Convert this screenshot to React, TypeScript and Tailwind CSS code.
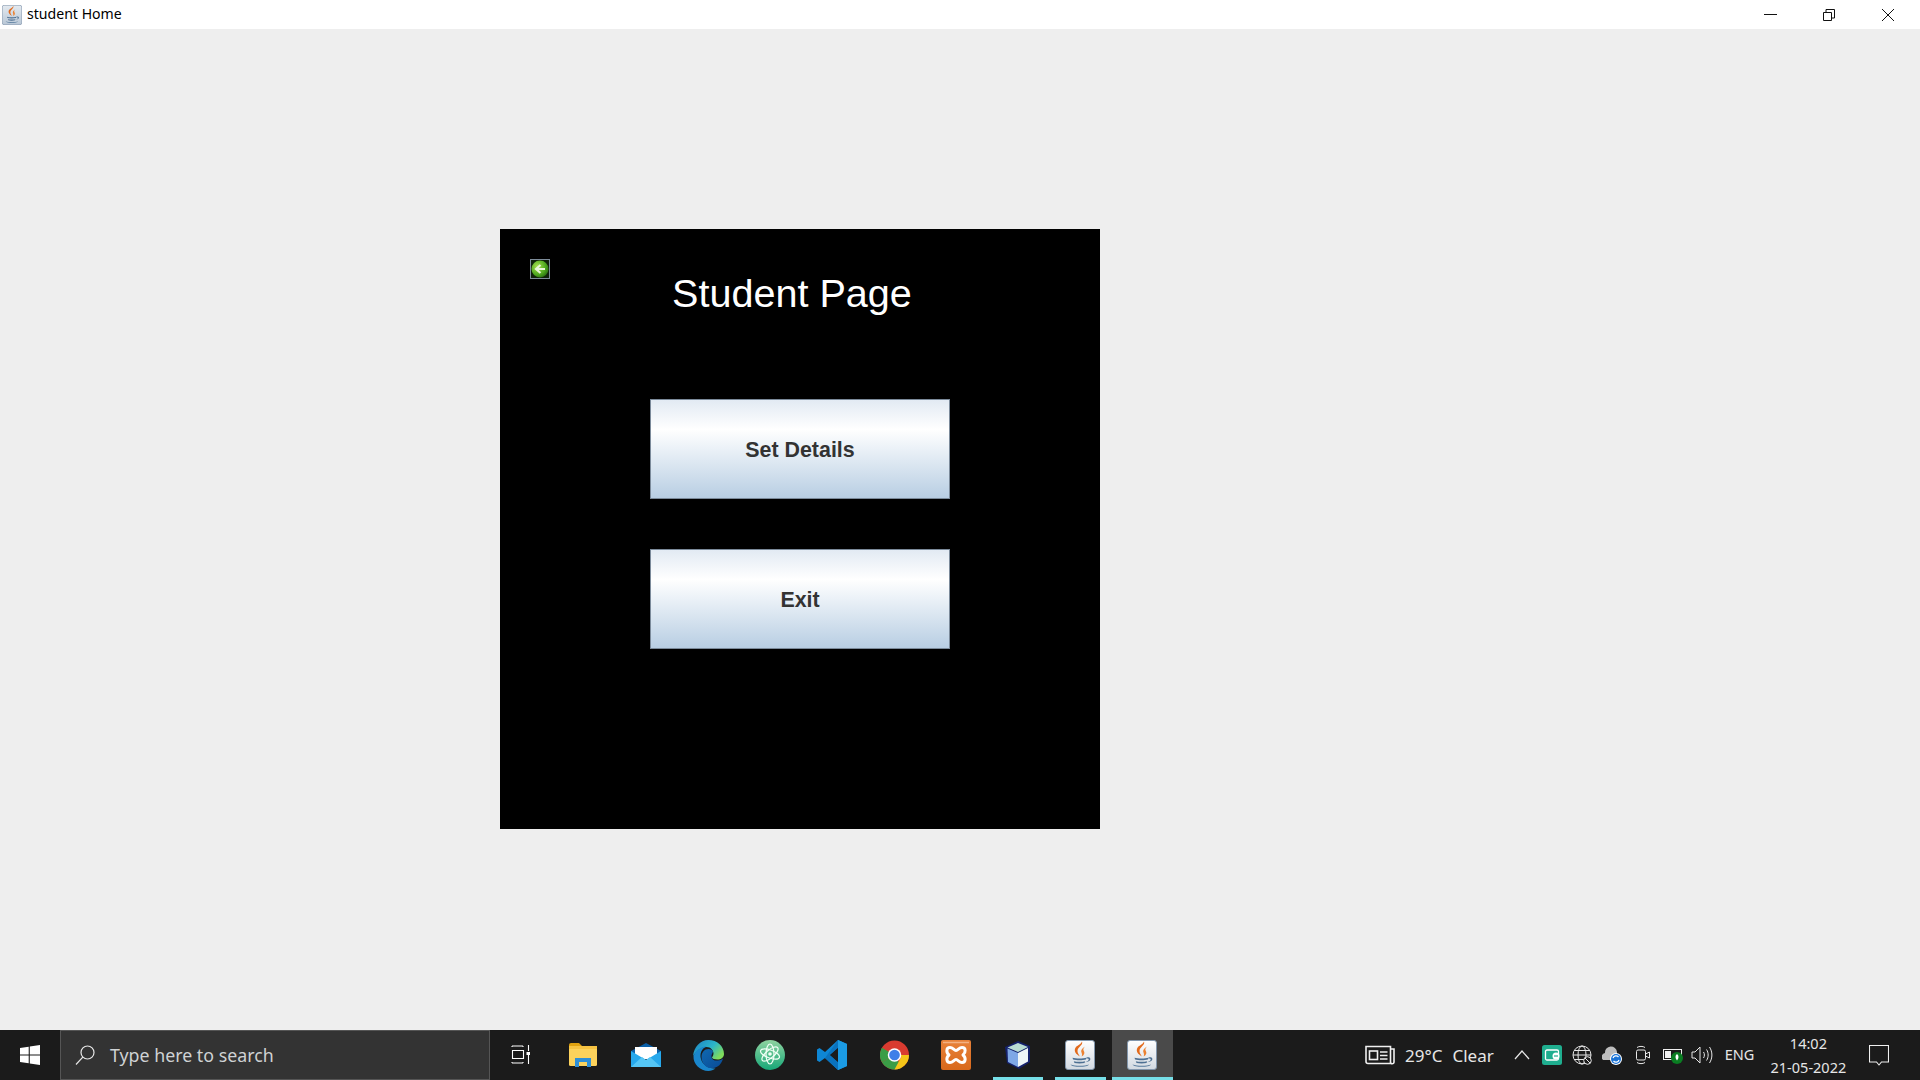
const sans = "font-['Liberation_Sans',Arial,sans-serif]";
const ui = "font-['Noto_Sans','Open_Sans',sans-serif]";

function JavaIcon({ size = 30, id, tint = false }: { size?: number; id: string; tint?: boolean }) {
  return (
    <svg width={size} height={size} viewBox="0 0 30 30">
      <defs>
        <linearGradient id={id} x1="0" y1="0" x2="0" y2="1">
          <stop offset="0" stopColor={tint ? "#e4eaf0" : "#ffffff"} />
          <stop offset="1" stopColor={tint ? "#b9c7d6" : "#d2d9e1"} />
        </linearGradient>
      </defs>
      <rect x="0.5" y="0.5" width="29" height="29" rx="2.5" fill={`url(#${id})`} stroke="#8296ac" />
      <path d="M17 1.500c1.500 3.500-4.500 5.500-4.500 9.500 0 2 1.300 3.500 2.300 5.500C11 14 8.700 11.500 10.300 8 11.500 5.500 16 4.500 17 1.500z" fill="#e26a1c" />
      <path d="M20 6.500c-2.500 1.800-4.500 3.500-3.500 6 .5 1.200.8 2.300.2 4 2.800-1.700 3.300-3.800 2-5.800-.8-1.300-.3-2.600 1.300-4.200z" fill="#ec8232" />
      <path d="M7.500 17.800c3.500 1 10.500 1 14 0l-.6 1.800c-3.300.9-9.500.9-12.800 0zM8.800 21.200c3 .8 8.400.8 11.400 0l-.7 1.800c-2.800.6-7.200.6-10 0z" fill="#4d6f92" />
      <path d="M21.500 17.500c3.500-1 5 1.500 3 3.300-1 .9-2.500 1.400-4.300 1.500 1.700-.7 3.200-1.400 3.500-2.500.2-1-.8-1.500-2.300-1.300z" fill="#4d6f92" />
      <path d="M5.500 24.500c4.500 1.800 14.500 1.800 18.500 0-1 3-17 3.200-18.500 0z" fill="#567a9c" />
    </svg>
  );
}

function Cell({ w = "w-[62px]", children, bar, active }: { w?: string; children: React.ReactNode; bar?: boolean; active?: boolean }) {
  return (
    <div className={`relative flex h-full items-center justify-center ${w} ${active ? "bg-[#4a4a4a]" : ""}`}>
      {children}
      {bar && <div className={`absolute bottom-0 h-[3px] bg-[#76dfe8] ${active ? "inset-x-0" : "inset-x-[6px]"}`} />}
    </div>
  );
}

function TaskButton({ label }: { label: string }) {
  return (
    <button className={`flex h-[100px] w-[300px] items-center justify-center border border-[#7b8a9a] bg-[linear-gradient(180deg,#e2eaf3_0%,#ffffff_30%,#b8cee3_100%)] pt-[3px] text-[21.4px] font-bold text-[#333333] ${sans}`}>
      {label}
    </button>
  );
}

export default function App() {
  return (
    <div className="flex h-screen w-full flex-col overflow-hidden bg-[#eeeeee]">
      {/* Title bar */}
      <div className="flex h-[29px] shrink-0 items-center bg-white">
        <div className="ml-[2px] mr-[5px] flex">
          <JavaIcon size={20} id="jt" tint />
        </div>
        <span className={`text-[14.1px] leading-none text-black ${ui}`}>student Home</span>
        <div className="ml-auto flex h-full items-center">
          <svg width="14" height="14" viewBox="0 0 14 14" className="mr-[44px]"><path d="M0 6.500h13" stroke="#111" strokeWidth="1" /></svg>
          <svg width="14" height="14" viewBox="0 0 14 14" className="mr-[45px]"><path d="M1.500 4.500h8v8h-8zM4 4.500V1.500h8.500V10H9.500" fill="none" stroke="#111" strokeWidth="1" /></svg>
          <svg width="14" height="14" viewBox="0 0 14 14" className="mr-[25px]"><path d="M1 1l12 12M13 1L1 13" stroke="#111" strokeWidth="1" /></svg>
        </div>
      </div>

      {/* Content */}
      <main className="flex-1 pl-[500px] pt-[200px]">
        <section className="h-[600px] w-[600px] bg-black">
          <div className="flex h-[170px] items-start pl-[30px] pt-[30px]">
            <svg width="20" height="20" viewBox="0 0 20 20" className="shrink-0">
              <defs>
                <radialGradient id="bk" cx="0.35" cy="0.35" r="0.8">
                  <stop offset="0" stopColor="#a8e050" />
                  <stop offset="0.6" stopColor="#4ea81e" />
                  <stop offset="1" stopColor="#1c5c0c" />
                </radialGradient>
              </defs>
              <rect x="0.500" y="0.500" width="19" height="19" fill="#10220a" stroke="#7d8b99" />
              <circle cx="10" cy="10" r="8.500" fill="url(#bk)" />
              <path d="M15 10H7M10.500 6L6 10l4.500 4" fill="none" stroke="#e8f6d8" strokeWidth="2.200" />
            </svg>
            <h1 className={`ml-[122px] mt-[11px] text-[39.6px] font-normal leading-[46px] text-white ${sans}`}>Student Page</h1>
          </div>
          <div className="flex flex-col gap-[50px] pl-[150px]">
            <TaskButton label="Set Details" />
            <TaskButton label="Exit" />
          </div>
        </section>
      </main>

      {/* Taskbar */}
      <footer className={`flex h-[50px] shrink-0 items-center bg-[#1b1b1b] text-[#e6e6e6] ${ui}`}>
        <div className="flex h-full w-[60px] items-center justify-center">
          <svg width="20" height="20" viewBox="0 0 20 20" fill="#fff">
            <path d="M0 3l8.700-1.300v7.800H0zM9.800 1.500L20 0v9.500H9.800zM0 10.500h8.700v7.800L0 17zM9.800 10.500H20V20L9.800 18.500z" />
          </svg>
        </div>
        <div className="flex h-full w-[430px] items-center border border-[#555555] bg-[#333333] pl-[13px]">
          <svg width="22" height="22" viewBox="0 0 22 22" fill="none" stroke="#e8e8e8" strokeWidth="1.200">
            <circle cx="13.500" cy="8.500" r="6.500" />
            <path d="M8.800 13.200L2 20.500" />
          </svg>
          <span className="ml-[14px] text-[17.8px] text-[#cfd2d4]">Type here to search</span>
        </div>

        <Cell w="w-[61px]">
          <svg width="20" height="20" viewBox="0 0 20 20" fill="none" stroke="#fff" strokeWidth="1.100">
            <path d="M1 1h11M1.500 5.500h11v8h-11zM1 18h11M1 18v-1M12 18v-1M1 1v1M12 1v1" />
            <path d="M17.500 0v6M17.500 10v9" />
            <rect x="15.500" y="7" width="3.500" height="3" fill="#fff" stroke="none" />
          </svg>
        </Cell>
        <Cell w="w-[64px]">
          <svg width="28" height="24" viewBox="0 0 28 24">
            <path d="M0 2a2 2 0 012-2h8l3 3h-13z" fill="#e0a210" />
            <rect x="0" y="3" width="28" height="20" rx="1.500" fill="#fcd25c" />
            <path d="M0 3h28v3H0z" fill="#f6c342" />
            <path d="M6 24v-9h16v9h-4v-5h-8v5z" fill="#2f8fd6" />
          </svg>
        </Cell>
        <Cell>
          <svg width="30" height="24" viewBox="0 0 30 24">
            <path d="M0 8L15 0l15 8v3H0z" fill="#0a5fa8" />
            <rect x="4" y="4" width="22" height="12" fill="#fff" />
            <path d="M0 8l15 9 15-9v16H0z" fill="#26a8ec" />
            <path d="M0 24l11-10 4 3 4-3 11 10z" fill="#55c6f5" />
          </svg>
        </Cell>
        <Cell>
          <svg width="31" height="31" viewBox="0 0 31 31">
            <defs>
              <linearGradient id="e1" x1="0" y1="0" x2="1" y2="0.600"><stop offset="0" stopColor="#1c7fc4" /><stop offset="0.600" stopColor="#2bb5c9" /><stop offset="1" stopColor="#7fdc5c" /></linearGradient>
              <linearGradient id="e2" x1="0" y1="0" x2="1" y2="1"><stop offset="0" stopColor="#0f68b0" /><stop offset="1" stopColor="#0a4b96" /></linearGradient>
            </defs>
            <path d="M15.500 0C24 0 31 6 31 14c0 3.500-3 5.500-6.500 5.500-3 0-5.500-1-5.500-2 0-.8 1.500-1.500 1.500-4 0-3-2.500-6.500-7-6.500-6 0-10 4.500-13.500 9C1 7 7 0 15.500 0z" fill="url(#e1)" />
            <path d="M.5 16c3-7 8-9.500 13-9.500-5 2-7 7-5.500 12.500 1.500 5.500 7.500 10 14.500 9.500-2 1.500-4.500 2.500-7 2.500C7 31 0 24 .5 16z" fill="#1a86cc" />
            <path d="M8.500 17c0-4.500 3-8 7-8 2 0 3.500.8 4.500 2 0 2-2 3.500-1.500 6 .5 3 3.500 4 6.500 3.500 2 0 3.500-.7 5-2-1.500 5.500-5 9-10 9.500C13.500 29 8.500 23.500 8.500 17z" fill="url(#e2)" />
          </svg>
        </Cell>
        <Cell>
          <svg width="30" height="30" viewBox="0 0 30 30">
            <defs><linearGradient id="at" x1="0" y1="0" x2="0" y2="1"><stop offset="0" stopColor="#8fd3a0" /><stop offset="1" stopColor="#17a878" /></linearGradient></defs>
            <ellipse cx="15" cy="15" rx="15" ry="15" fill="url(#at)" />
            <g fill="none" stroke="#f2fff6" strokeWidth="1.200">
              <ellipse cx="15" cy="14" rx="10" ry="4" transform="rotate(20 15 14)" />
              <ellipse cx="15" cy="14" rx="10" ry="4" transform="rotate(90 15 14)" />
              <ellipse cx="15" cy="14" rx="10" ry="4" transform="rotate(-40 15 14)" />
            </g>
            <circle cx="15" cy="14" r="1.800" fill="#f2fff6" />
          </svg>
        </Cell>
        <Cell>
          <svg width="30" height="30" viewBox="0 0 30 30">
            <path d="M21 0l9 4v22l-9 4-13-12-5.500 4L0 20.500V9.500L2.500 8 8 12zM21 8l-8 7 8 7z" fill="#0e86d4" fillRule="evenodd" />
            <path d="M21 0l9 4v22l-9 4z" fill="#1b9be4" />
            <path d="M21 8l-8 7 8 7V30L8 18 21 0z" fill="#0a72bd" fillRule="evenodd" />
            <path d="M21 8v14l-8-7z" fill="#1b1b1b" />
          </svg>
        </Cell>
        <Cell>
          <svg width="29" height="30" viewBox="0 0 30 30">
            <circle cx="15" cy="15" r="15" fill="#d93b30" />
            <path d="M15 15L2 22.500A15 15 0 0 1 2 7.500z" fill="#3a9d46" />
            <path d="M2 22.500L15 15l7.500 13A15 15 0 0 1 2 22.500z" fill="#3a9d46" />
            <path d="M15 15h15A15 15 0 0 1 15 30l7-13z" fill="#f5c518" />
            <circle cx="15" cy="15" r="7" fill="#fff" />
            <circle cx="15" cy="15" r="5.500" fill="#3f7fe8" />
          </svg>
        </Cell>
        <Cell>
          <svg width="30" height="30" viewBox="0 0 30 30">
            <defs><linearGradient id="xp" x1="0" y1="0" x2="0" y2="1"><stop offset="0" stopColor="#e8823a" /><stop offset="1" stopColor="#d9691c" /></linearGradient></defs>
            <rect width="30" height="30" rx="2" fill="url(#xp)" />
            <path d="M2 2.500h26" stroke="#f3b182" strokeWidth="1.500" />
            <path d="M9 7.500c3 0 4 3 6 3s3-3 6-3c4 0 4 5 1 7.500 3 2.500 3 7.500-1 7.500-3 0-4-3-6-3s-3 3-6 3c-4 0-4-5-1-7.500-3-2.500-3-7.500 1-7.500z" fill="none" stroke="#fff" strokeWidth="3" strokeLinejoin="round" />
          </svg>
        </Cell>
        <Cell w="w-[62px]" bar>
          <svg width="28" height="28" viewBox="0 0 28 28">
            <path d="M14 0l12 5v16l-11 7-12-6L1 6z" fill="#14206a" />
            <path d="M14 2l10 4-10 5L3.500 6.500z" fill="#b9dcd4" />
            <path d="M3.500 7.500L14 12v14L4 21z" fill="#7fa8e6" />
            <path d="M14 12l10-5v13.500L14 26z" fill="#eef5f7" />
          </svg>
        </Cell>
        <Cell w="w-[63px]" bar><div className="mr-[2px] flex"><JavaIcon id="j1" /></div></Cell>
        <Cell w="w-[61px]" bar active><div className="mr-[2px] flex"><JavaIcon id="j2" /></div></Cell>

        <div className="ml-[192px] flex h-full items-center">
          <svg width="30" height="20" viewBox="0 0 30 20" fill="none" stroke="#f0f0f0" strokeWidth="1.600">
            <path d="M1 1.500h24.500V18.500H3a2 2 0 01-2-2zM25.500 4H29v13a1.700 1.700 0 01-3.500 0" />
            <rect x="4.500" y="6" width="8" height="8.500" />
            <path d="M15 7h7.500M15 10.500h7.500M15 14h7.500" />
          </svg>
          <span className="ml-[10px] pt-[1px] text-[17px]">29°C</span>
          <span className="ml-[10px] pt-[1px] text-[17px]">Clear</span>
          <svg width="16" height="10" viewBox="0 0 16 10" fill="none" stroke="#e8e8e8" strokeWidth="1.200" className="ml-[20px]"><path d="M1 9l7-8 7 8" /></svg>
          <svg width="20" height="20" viewBox="0 0 20 20" className="ml-[12px]">
            <rect width="20" height="20" rx="2.500" fill="#1fae8f" />
            <rect x="3.500" y="5" width="13" height="10" rx="1.500" fill="none" stroke="#fff" strokeWidth="1.300" />
            <circle cx="14" cy="11" r="3.500" fill="#fff" />
            <path d="M12 11h4" stroke="#1fae8f" strokeWidth="1.200" />
          </svg>
          <svg width="20" height="20" viewBox="0 0 20 20" fill="none" stroke="#e8e8e8" strokeWidth="1" className="ml-[10px]">
            <circle cx="10" cy="10" r="9" />
            <ellipse cx="10" cy="10" rx="4" ry="9" />
            <path d="M1 10h18M2.200 5.500h15.600M2.200 14.500h15.600" />
            <circle cx="15.500" cy="15.500" r="3.800" fill="#1b1b1b" />
            <path d="M13 13l5 5" />
          </svg>
          <svg width="20" height="20" viewBox="0 0 20 20" className="ml-[10px]">
            <path d="M1 15a4 4 0 012-7 6 6 0 0112-1v8z" fill="#bdbdbd" />
            <circle cx="14" cy="14" r="6" fill="#fff" />
            <circle cx="14" cy="14" r="5" fill="#1a73d6" />
            <path d="M11 13a3.200 3.200 0 015.500-1M17 15a3.200 3.200 0 01-5.500 1" fill="none" stroke="#fff" strokeWidth="1.200" />
          </svg>
          <svg width="16" height="20" viewBox="0 0 16 20" fill="none" stroke="#e8e8e8" strokeWidth="1" className="ml-[13px]">
            <rect x="1.500" y="5" width="9" height="10" rx="1.500" />
            <path d="M10.500 9l4-2v6l-4-2M2 2.500c2-1.500 6-1.500 8 0M2 17.500c2 1.500 6 1.500 8 0" />
          </svg>
          <svg width="20" height="18" viewBox="0 0 20 18" className="ml-[12px]">
            <rect x="0.500" y="3.500" width="18" height="10" fill="none" stroke="#f0f0f0" />
            <rect x="2" y="5" width="6" height="7" fill="#f0f0f0" />
            <circle cx="14" cy="12" r="6" fill="#0a7d22" />
            <path d="M14 8c2 1.500 2 4 0 6.500-2-2.500-2-5 0-6.500z" fill="#fff" />
          </svg>
          <svg width="22" height="20" viewBox="0 0 22 20" fill="none" stroke="#e8e8e8" strokeWidth="1" className="ml-[8px]">
            <path d="M1 7h3l5-5v16l-5-5H1z" />
            <path d="M12.500 7c1.200 1.800 1.200 4.200 0 6M15.500 4.500c2.200 3.300 2.200 7.700 0 11M18.500 2c3.200 5 3.200 11 0 16" />
          </svg>
          <span className="ml-[12px] text-[14.5px]">ENG</span>
          <div className="ml-[16px] flex w-[76px] flex-col items-center text-[14.5px] leading-[24px]">
            <span>14:02</span>
            <span>21-05-2022</span>
          </div>
          <svg width="20" height="21" viewBox="0 0 20 21" fill="none" stroke="#f0f0f0" strokeWidth="1.100" className="ml-[23px]">
            <path d="M.5.500h19v16.500h-7l-2.500 3-2.500-3h-7z" />
          </svg>
        </div>
      </footer>
    </div>
  );
}
